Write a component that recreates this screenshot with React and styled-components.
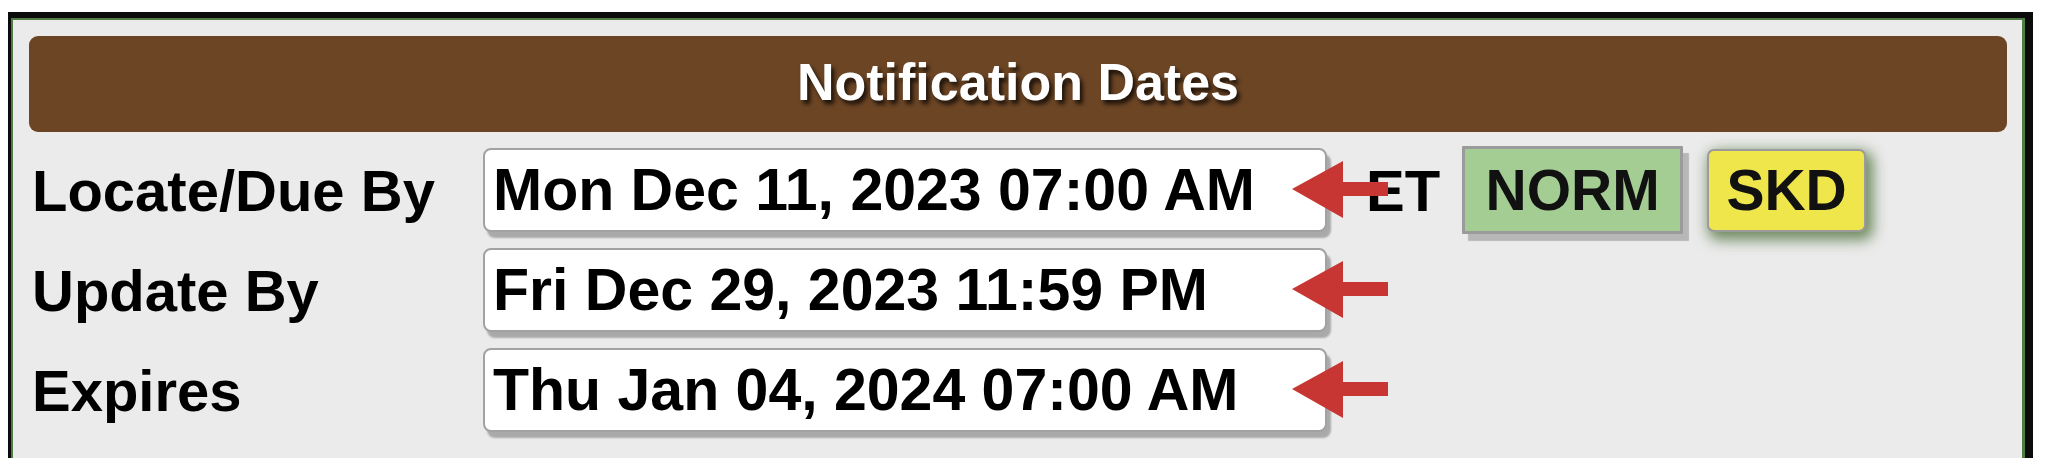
import styled, { createGlobalStyle } from 'styled-components';

const GlobalStyle = createGlobalStyle`
  html, body {
    margin: 0;
    padding: 0;
    background: #ffffff;
  }
  body {
    font-family: "Liberation Sans", Arial, sans-serif;
  }
`;

const Frame = styled.div`
  margin: 12px 15px 0 8px;
  border-style: solid;
  border-color: #0b0b0b;
  border-width: 6px 8px 0 3px;
`;

const Panel = styled.section`
  background-color: #ebebeb;
  border-style: solid;
  border-color: #4f7d44;
  border-width: 2px 3px 0 2px;
  padding: 16px 15px 26px 16px;
  display: flex;
  flex-direction: column;
  gap: 16px;
`;

const Header = styled.h2`
  margin: 0;
  height: 96px;
  border-radius: 9px;
  background-color: #6c4524;
  color: #ffffff;
  font-size: 52px;
  font-weight: bold;
  display: flex;
  align-items: center;
  justify-content: center;
  padding-bottom: 4px;
  box-sizing: border-box;
  text-shadow: 3px 4px 4px rgba(0, 0, 0, 0.75);
`;

const Row = styled.div`
  display: flex;
  align-items: center;
  height: 84px;
`;

const Label = styled.div`
  flex: none;
  width: 454px;
  padding-left: 3px;
  box-sizing: border-box;
  font-size: 58px;
  font-weight: bold;
  color: #000;
`;

const InputWrap = styled.div`
  position: relative;
  flex: none;
`;

const DateBox = styled.div`
  width: 844px;
  height: 84px;
  box-sizing: border-box;
  border: 2px solid #a2a2a2;
  border-radius: 8px;
  background: #ffffff;
  box-shadow: 4px 6px 2px rgba(0, 0, 0, 0.28);
  padding-left: 8px;
  display: flex;
  align-items: center;
  font-size: 59px;
  font-weight: bold;
  color: #000;
  white-space: nowrap;
`;

const Arrow = styled.svg`
  position: absolute;
  left: 809px;
  top: 50%;
  transform: translateY(-50%);
  width: 96px;
  height: 58px;
  z-index: 2;
`;

const Zone = styled.span`
  margin-left: 39px;
  font-size: 58px;
  font-weight: bold;
  color: #000;
`;

const Badge = styled.div`
  box-sizing: border-box;
  display: flex;
  align-items: center;
  justify-content: center;
  font-size: 57px;
  font-weight: bold;
  color: #111;
  margin-left: ${p => p.$gap}px;
  width: ${p => p.$w}px;
  height: ${p => p.$h}px;
  background-color: ${p => p.$bg};
  border: ${p => p.$bw}px solid #9b9b9b;
  border-radius: ${p => p.$radius}px;
  box-shadow: ${p => p.$shadow};
`;

const PointerArrow = () => (
  <Arrow viewBox="0 0 96 58">
    <polygon points="0,28 51,0 51,21 96,21 96,35 51,35 51,57" fill="#c73632" />
  </Arrow>
);

const dates = [
  { label: 'Locate/Due By', value: 'Mon Dec 11, 2023 07:00 AM', extra: true },
  { label: 'Update By', value: 'Fri Dec 29, 2023 11:59 PM' },
  { label: 'Expires', value: 'Thu Jan 04, 2024 07:00 AM' },
];

export default function App() {
  return (
    <>
      <GlobalStyle />
      <Frame>
        <Panel>
          <Header>Notification Dates</Header>
          {dates.map(d => (
            <Row key={d.label}>
              <Label>{d.label}</Label>
              <InputWrap>
                <DateBox>{d.value}</DateBox>
                <PointerArrow />
              </InputWrap>
              {d.extra && (
                <>
                  <Zone>ET</Zone>
                  <Badge
                    $gap={22}
                    $w={221}
                    $h={88}
                    $bw={3}
                    $radius={1}
                    $bg="#a3cd93"
                    $shadow="6px 7px 1px rgba(0, 0, 0, 0.22)"
                  >
                    NORM
                  </Badge>
                  <Badge
                    $gap={24}
                    $w={159}
                    $h={83}
                    $bw={2}
                    $radius={7}
                    $bg="#efe64c"
                    $shadow="4px 5px 14px 3px rgba(70, 105, 50, 0.75)"
                  >
                    SKD
                  </Badge>
                </>
              )}
            </Row>
          ))}
        </Panel>
      </Frame>
    </>
  );
}
